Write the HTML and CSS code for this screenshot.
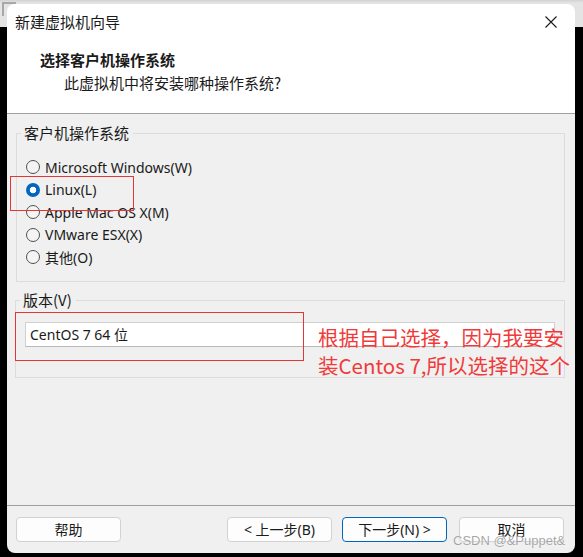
FILE: index.html
```html
<!DOCTYPE html>
<html lang="zh-CN">
<head>
<meta charset="utf-8">
<title>新建虚拟机向导</title>
<link rel="stylesheet" href="styles.css">
</head>
<body>
<div class="screen">
  <div class="behind-corner"></div>
  <div class="window">
    <div class="titlebar">
      <span class="title">新建虚拟机向导</span>
      <span class="close">
        <svg width="12" height="12" viewBox="0 0 12 12"><path d="M0.5 0.5 L11.5 11.5 M11.5 0.5 L0.5 11.5" stroke="#1a1a1a" stroke-width="1.1" fill="none"/></svg>
      </span>
    </div>
    <div class="header">
      <div class="heading">选择客户机操作系统</div>
      <div class="subheading">此虚拟机中将安装哪种操作系统?</div>
    </div>
    <div class="content">
      <fieldset class="group group-os">
        <legend>客户机操作系统</legend>
        <div class="group-body">
          <div class="radio-row"><span class="radio"></span><span>Microsoft Windows(W)</span></div>
          <div class="radio-row"><span class="radio checked"></span><span>Linux(L)</span></div>
          <div class="radio-row"><span class="radio"></span><span>Apple Mac OS X(M)</span></div>
          <div class="radio-row"><span class="radio"></span><span>VMware ESX(X)</span></div>
          <div class="radio-row"><span class="radio"></span><span>其他(O)</span></div>
        </div>
      </fieldset>
      <fieldset class="group group-ver">
        <legend>版本(V)</legend>
        <div class="group-body">
          <div class="select">CentOS 7 64 位</div>
        </div>
      </fieldset>
    </div>
    <div class="footer">
      <button class="btn btn-help">帮助</button>
      <div class="footer-right">
        <button class="btn">&lt; 上一步(B)</button>
        <button class="btn btn-default">下一步(N) &gt;</button>
        <button class="btn btn-cancel">取消</button>
      </div>
    </div>
  </div>
  <div class="mark mark-linux"></div>
  <div class="mark mark-version"></div>
  <div class="note">根据自己选择，因为我要安<br>装Centos 7,所以选择的这个</div>
  <div class="watermark">CSDN @&amp;Puppet&amp;</div>
</div>
</body>
</html>
```
FILE: styles.css
```css
* { box-sizing: border-box; }
html, body { margin: 0; padding: 0; }
body {
  font-family: "Noto Sans", "Noto Sans CJK SC", sans-serif;
  font-size: 15px;
  color: #1a1a1a;
}
.screen {
  position: relative;
  width: 583px;
  height: 557px;
  overflow: hidden;
  background: linear-gradient(#d2d2d2 0, #e4e4e4 3px, #e4e4e4 27px, #000 27px);
  padding: 4px 8px 4px 7px;
}
.behind-corner {
  position: absolute;
  left: 2px;
  top: 2px;
  width: 14px;
  height: 14px;
  border-left: 2px solid #a8a8a8;
  border-top: 2px solid #a8a8a8;
}
.window {
  position: relative;
  width: 568px;
  height: 549px;
  border-radius: 8px;
  background: #f0f0f0;
  overflow: hidden;
  display: flex;
  flex-direction: column;
}
.titlebar {
  height: 36px;
  line-height: 36px;
  background: #fff;
  padding-left: 8px;
  display: flex;
  justify-content: space-between;
  align-items: center;
}
.title { font-family: "Noto Sans CJK SC", sans-serif; font-size: 15px; }
.close {
  width: 46px;
  height: 36px;
  display: flex;
  align-items: center;
  justify-content: center;
  margin-right: 1px;
}
.close svg { display: block; }
.header {
  background: #fff;
  padding: 10px 0 20px 33px;
  border-bottom: 1px solid #a0a0a0;
  font-family: "Noto Sans CJK SC", sans-serif;
}
.heading {
  font-weight: bold;
  font-size: 15px;
  line-height: 20px;
}
.subheading {
  margin-top: 3px;
  padding-left: 24px;
  font-size: 15px;
  line-height: 20px;
}
.content { padding: 0 10px 0 9px; }
.group {
  margin: 0;
  border: 1px solid #dcdcdc;
  padding: 0;
  min-width: 0;
}
.group legend {
  margin-left: 4px;
  padding: 0 4px 0 3px;
  line-height: 20px;
  font-family: "Noto Sans CJK SC", sans-serif;
  font-size: 15px;
}
.group-os { margin-top: 9px; }
.group-os .group-body { padding: 13px 0 12.5px 9px; }
.group-ver { margin-top: 8px; margin-left: -1px; }
.group-ver .group-body { padding: 12px 9px 30px 9px; }
.radio-row {
  height: 22.5px;
  display: flex;
  align-items: center;
  gap: 5px;
  font-family: "Noto Sans", "Noto Sans CJK SC", sans-serif;
  font-size: 14px;
}
.radio {
  width: 14px;
  height: 14px;
  border-radius: 50%;
  border: 1px solid #505050;
  background: #f4f4f4;
  flex: none;
}
.radio.checked {
  border: none;
  background: radial-gradient(circle, #fff 0 3px, #0067c0 3.6px);
}
.select {
  height: 25px;
  line-height: 23px;
  background: #fff;
  border: 1px solid #d0d0d0;
  border-bottom-color: #b8b8b8;
  padding-left: 4px;
  font-family: "Noto Sans", "Noto Sans CJK SC", sans-serif;
  font-size: 14px;
}
.footer {
  margin-top: auto;
  height: 48px;
  border-top: 1px solid #a0a0a0;
  padding: 11px 11px 11px 9px;
  display: flex;
  justify-content: space-between;
}
.footer-right { display: flex; gap: 10px; }
.btn {
  width: 105px;
  height: 25px;
  padding: 0;
  background: #fdfdfd;
  border: 1px solid #d2d2d2;
  border-radius: 4px;
  font-family: "Noto Sans", "Noto Sans CJK SC", sans-serif;
  font-size: 14px;
  color: #1a1a1a;
  line-height: 23px;
}
.btn-default { border-color: #0067c0; }
.btn-cancel { margin-left: 2px; }
.mark {
  position: absolute;
  border: 1px solid #e53535;
}
.mark-linux { left: 10px; top: 176px; width: 124px; height: 35px; }
.mark-version { left: 15px; top: 312px; width: 289px; height: 49px; }
.note {
  position: absolute;
  left: 318px;
  top: 323px;
  font-family: "Noto Sans CJK SC", sans-serif;
  font-size: 20.5px;
  line-height: 28px;
  color: #f03a3a;
  white-space: nowrap;
}
.watermark {
  position: absolute;
  left: 453px;
  top: 533px;
  font-family: "Liberation Sans", sans-serif;
  font-size: 13px;
  line-height: 16px;
  color: rgba(150,150,150,0.85);
  text-shadow: 0 0 1px #fff;
}
```
